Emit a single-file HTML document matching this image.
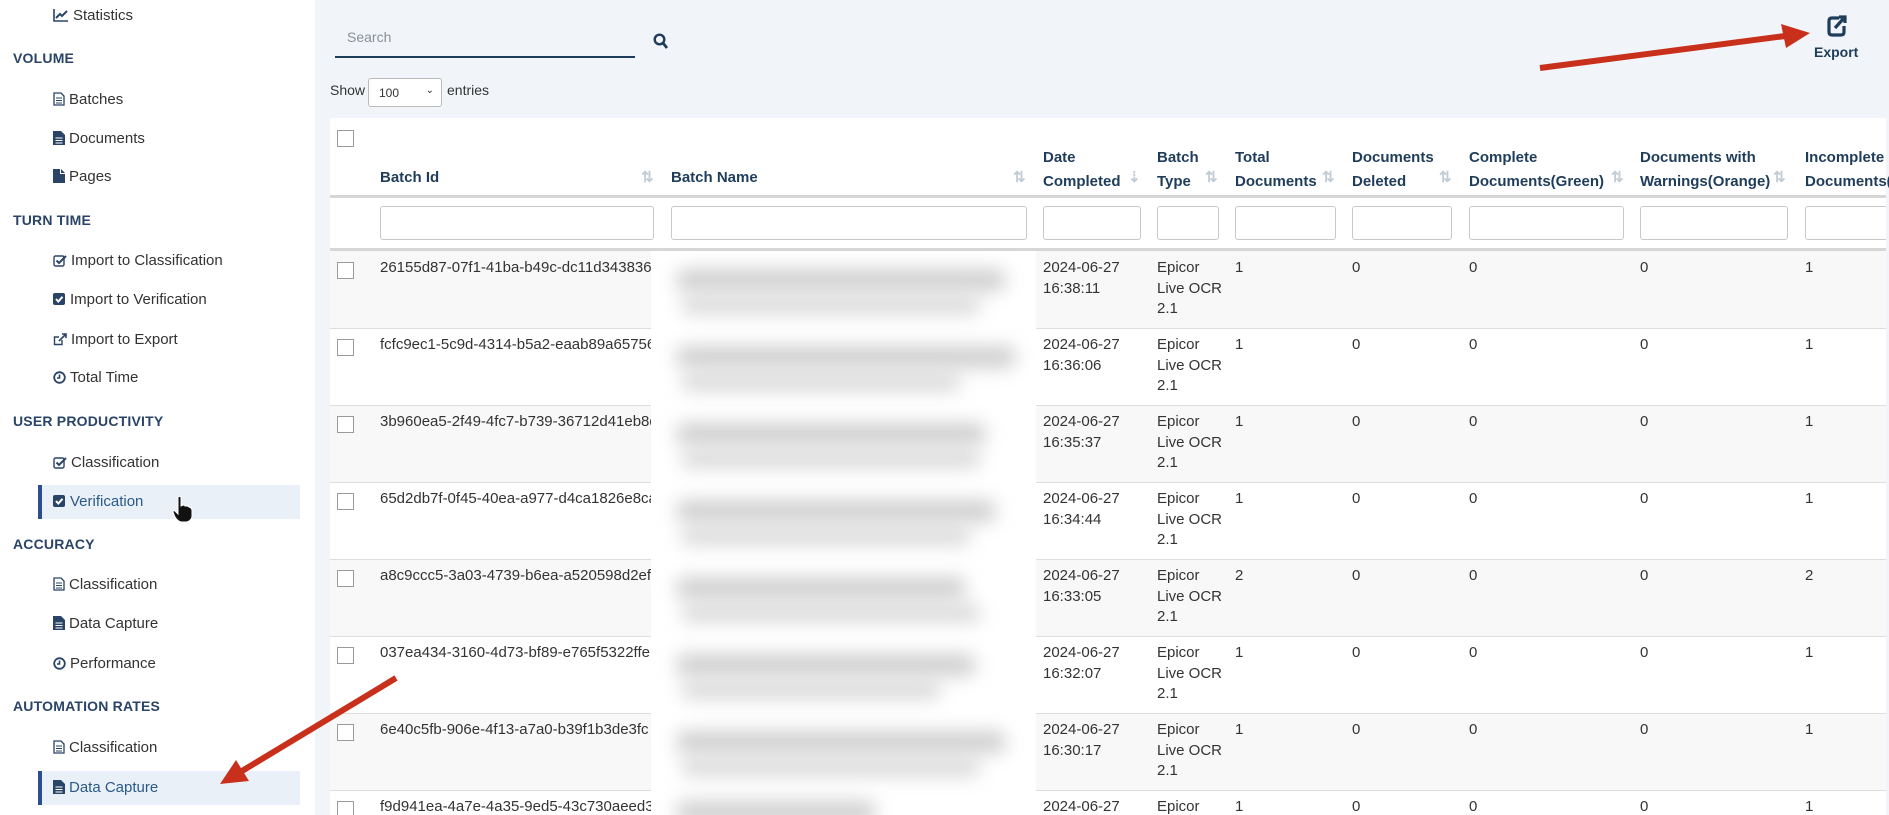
<!DOCTYPE html>
<html style="width:1889px;height:815px;overflow:hidden"><head><meta charset="utf-8"><style>
*{box-sizing:border-box;margin:0;padding:0}
html,body{overflow:hidden}
body{width:1889px;height:815px;overflow:hidden;background:#f1f5f9;font-family:"Liberation Sans",Arial,sans-serif;position:relative;color:#333}
.a{position:absolute;white-space:nowrap}
#sb{position:absolute;left:0;top:0;width:315px;height:815px;background:#fff}
.h{position:absolute;left:13px;font-size:14px;font-weight:bold;color:#2a4468;letter-spacing:.2px}
.it{position:absolute;left:38px;width:262px;height:34px;font-size:15px;color:#333;padding-left:15px;line-height:34px}
.it svg{vertical-align:-2px;margin-right:4px}
.sel{background:#e9f0f8;border-left:4px solid #2b4f8c;padding-left:11px;color:#2b5a88}
.th{position:absolute;font-size:15px;font-weight:bold;color:#1f3d5a;line-height:24px}
.srt{position:absolute;color:#c3cdd6;font-size:15px;font-weight:bold}
.fi{position:absolute;top:206px;height:34px;border:1px solid #c8c8c8;border-radius:3px;background:#fff}
.row{position:absolute;left:330px;width:1556px;height:77px;border-top:1px solid #ddd}
.cb{position:absolute;width:17px;height:17px;border:1px solid #9a9a9a;background:#fff}
.c{position:absolute;font-size:15px;color:#333;line-height:20.5px}
.blur{position:absolute;background:#cfcfcf;filter:blur(9px);border-radius:10px}
</style></head><body>
<div style="position:absolute;left:0;top:0;width:1889px;height:815px;overflow:hidden">

<div id="sb">
<div class="it" style="top:0px;height:32px;line-height:32px"><svg width="16" height="14" viewBox="0 0 16 14"><path d="M1 1V13H15" stroke="#2a4468" stroke-width="1.6" fill="none"/><path d="M3 10L7 6L9 8L14 3" stroke="#2a4468" stroke-width="2" fill="none"/></svg>Statistics</div>
<div class="h" style="top:50px">VOLUME</div>
<div class="it" style="top:83px"><svg width="12" height="14" viewBox="0 0 12 14"><path d="M1 1H8L11 4V13H1Z" stroke="#2a4468" stroke-width="1.3" fill="none"/><path d="M3 6H9M3 8.5H9M3 11H9" stroke="#2a4468"/></svg>Batches</div>
<div class="it" style="top:122px"><svg width="12" height="14" viewBox="0 0 12 14"><path d="M0 0H8L12 4V14H0Z" fill="#2a4468"/><path d="M2.5 7H9.5M2.5 9.5H9.5M2.5 12H9.5" stroke="#fff"/></svg>Documents</div>
<div class="it" style="top:160px"><svg width="12" height="14" viewBox="0 0 12 14"><path d="M0 0H7V5H12V14H0Z" fill="#2a4468"/><path d="M8 0L12 4H8Z" fill="#2a4468"/></svg>Pages</div>
<div class="h" style="top:212px">TURN TIME</div>
<div class="it" style="top:244px"><svg width="14" height="13" viewBox="0 0 14 13"><rect x="1" y="2" width="10" height="10" rx="1.5" stroke="#2a4468" stroke-width="1.4" fill="none"/><path d="M3.5 6.5L6 9L13 2" stroke="#2a4468" stroke-width="2" fill="none"/></svg>Import to Classification</div>
<div class="it" style="top:283px"><svg width="13" height="13" viewBox="0 0 13 13"><rect width="12" height="12" rx="2" fill="#2a4468"/><path d="M3 6L5.3 8.5L9.5 3.8" stroke="#fff" stroke-width="2" fill="none"/></svg>Import to Verification</div>
<div class="it" style="top:323px"><svg width="14" height="13" viewBox="0 0 14 13"><path d="M9 7V11.5H1.5V4H6" stroke="#2a4468" stroke-width="1.4" fill="none"/><path d="M6 8L13 1M9 1H13V5" stroke="#2a4468" stroke-width="1.6" fill="none"/></svg>Import to Export</div>
<div class="it" style="top:361px"><svg width="13" height="13" viewBox="0 0 13 13"><circle cx="6.5" cy="6.5" r="5.3" stroke="#2a4468" stroke-width="1.8" fill="none"/><path d="M6.5 3.5V7H4" stroke="#2a4468" stroke-width="1.6" fill="none"/></svg>Total Time</div>
<div class="h" style="top:413px">USER PRODUCTIVITY</div>
<div class="it" style="top:446px"><svg width="14" height="13" viewBox="0 0 14 13"><rect x="1" y="2" width="10" height="10" rx="1.5" stroke="#2a4468" stroke-width="1.4" fill="none"/><path d="M3.5 6.5L6 9L13 2" stroke="#2a4468" stroke-width="2" fill="none"/></svg>Classification</div>
<div class="it sel" style="top:485px"><svg width="13" height="13" viewBox="0 0 13 13"><rect width="12" height="12" rx="2" fill="#2a4468"/><path d="M3 6L5.3 8.5L9.5 3.8" stroke="#fff" stroke-width="2" fill="none"/></svg>Verification</div>
<div class="h" style="top:536px">ACCURACY</div>
<div class="it" style="top:568px"><svg width="12" height="14" viewBox="0 0 12 14"><path d="M1 1H8L11 4V13H1Z" stroke="#2a4468" stroke-width="1.3" fill="none"/><path d="M3 6H9M3 8.5H9M3 11H9" stroke="#2a4468"/></svg>Classification</div>
<div class="it" style="top:607px"><svg width="12" height="14" viewBox="0 0 12 14"><path d="M0 0H8L12 4V14H0Z" fill="#2a4468"/><path d="M2.5 7H9.5M2.5 9.5H9.5M2.5 12H9.5" stroke="#fff"/></svg>Data Capture</div>
<div class="it" style="top:647px"><svg width="13" height="13" viewBox="0 0 13 13"><circle cx="6.5" cy="6.5" r="5.3" stroke="#2a4468" stroke-width="1.8" fill="none"/><path d="M6.5 3.5V7H4" stroke="#2a4468" stroke-width="1.6" fill="none"/></svg>Performance</div>
<div class="h" style="top:698px">AUTOMATION RATES</div>
<div class="it" style="top:731px"><svg width="12" height="14" viewBox="0 0 12 14"><path d="M1 1H8L11 4V13H1Z" stroke="#2a4468" stroke-width="1.3" fill="none"/><path d="M3 6H9M3 8.5H9M3 11H9" stroke="#2a4468"/></svg>Classification</div>
<div class="it sel" style="top:771px"><svg width="12" height="14" viewBox="0 0 12 14"><path d="M0 0H8L12 4V14H0Z" fill="#2a4468"/><path d="M2.5 7H9.5M2.5 9.5H9.5M2.5 12H9.5" stroke="#fff"/></svg>Data Capture</div>
</div>

<svg class="a" style="left:172px;top:495px" width="22" height="28" viewBox="0 0 22 28"><path d="M6 2C7 1 9 1 9 3V11L11 10C12 10 13 10 13 11L15 11C16 11 17 12 17 12L19 13C20 14 20 15 20 16V21C20 24 17 27 14 27H10C7 27 5 25 3 22L1 17C1 16 2 15 3 16L6 19V3Z" fill="#111" stroke="#fff" stroke-width="1"/></svg>

<div class="a" style="left:347px;top:29px;font-size:14px;color:#8a8f95">Search</div>
<div class="a" style="left:335px;top:56px;width:300px;height:2px;background:#1f3d5a"></div>
<svg class="a" style="left:653px;top:33px" width="16" height="17" viewBox="0 0 16 17"><circle cx="6.5" cy="6.5" r="4.8" stroke="#1f3d5a" stroke-width="2.4" fill="none"/><path d="M10 10L14 15" stroke="#1f3d5a" stroke-width="2.8"/></svg>
<div class="a" style="left:330px;top:82px;font-size:14px;color:#333">Show</div>
<div class="a" style="left:368px;top:78px;width:74px;height:29px;border:1px solid #bbb;border-radius:3px;background:#fff;font-size:12px;padding:7px 0 0 10px">100<span style="position:absolute;right:7px;top:6px;font-size:10px">&#8964;</span></div>
<div class="a" style="left:447px;top:82px;font-size:14px;color:#333">entries</div>

<svg class="a" style="left:1826px;top:14px" width="22" height="24" viewBox="0 0 22 24"><path d="M13 4H6C4 4 3 5 3 7V18C3 20 4 21 6 21H15C17 21 18 20 18 18V12" stroke="#1f3d5a" stroke-width="3.2" fill="none"/><path d="M9 14L18 4M13 3H19V9" stroke="#1f3d5a" stroke-width="3.2" fill="none"/></svg>
<div class="a" style="left:1814px;top:44px;font-size:14px;font-weight:bold;color:#1f3d5a">Export</div>

<div class="a" style="left:330px;top:118px;width:1556px;height:697px;background:#fff"></div>
<div class="cb" style="left:337px;top:130px"></div>
<div class="th" style="left:380px;top:166px">Batch Id</div>
<div class="th" style="left:671px;top:166px">Batch Name</div>
<div class="th" style="left:1043px;top:146px">Date<br>Completed</div>
<div class="th" style="left:1157px;top:146px">Batch<br>Type</div>
<div class="th" style="left:1235px;top:146px">Total<br>Documents</div>
<div class="th" style="left:1352px;top:146px">Documents<br>Deleted</div>
<div class="th" style="left:1469px;top:146px">Complete<br>Documents(Green)</div>
<div class="th" style="left:1640px;top:146px">Documents with<br>Warnings(Orange)</div>
<div class="th" style="left:1805px;top:146px">Incomplete<br>Documents(</div>
<div class="srt" style="left:641px;top:168px">&#8645;</div>
<div class="srt" style="left:1013px;top:168px">&#8645;</div>
<div class="srt" style="left:1128px;top:168px">&#8675;</div>
<div class="srt" style="left:1205px;top:168px">&#8645;</div>
<div class="srt" style="left:1322px;top:168px">&#8645;</div>
<div class="srt" style="left:1439px;top:168px">&#8645;</div>
<div class="srt" style="left:1611px;top:168px">&#8645;</div>
<div class="srt" style="left:1773px;top:168px">&#8645;</div>
<div class="a" style="left:330px;top:195px;width:1556px;height:3px;background:#d6d6d6"></div>
<div class="fi" style="left:380px;width:274px"></div>
<div class="fi" style="left:671px;width:356px"></div>
<div class="fi" style="left:1043px;width:98px"></div>
<div class="fi" style="left:1157px;width:62px"></div>
<div class="fi" style="left:1235px;width:101px"></div>
<div class="fi" style="left:1352px;width:100px"></div>
<div class="fi" style="left:1469px;width:155px"></div>
<div class="fi" style="left:1640px;width:148px"></div>
<div class="fi" style="left:1805px;width:81px;border-right:0;border-radius:3px 0 0 3px"></div>
<div class="a" style="left:330px;top:248px;width:1556px;height:3px;background:#d6d6d6"></div>

<div class="row" style="top:251px;background:#f8f8f8;border-top:0"></div>
<div class="row" style="top:328px;background:#fff"></div>
<div class="row" style="top:405px;background:#f8f8f8"></div>
<div class="row" style="top:482px;background:#fff"></div>
<div class="row" style="top:559px;background:#f8f8f8"></div>
<div class="row" style="top:636px;background:#fff"></div>
<div class="row" style="top:713px;background:#f8f8f8"></div>
<div class="row" style="top:790px;background:#fff"></div>

<div class="cb" style="left:337px;top:262px"></div><div class="cb" style="left:337px;top:339px"></div><div class="cb" style="left:337px;top:416px"></div><div class="cb" style="left:337px;top:493px"></div><div class="cb" style="left:337px;top:570px"></div><div class="cb" style="left:337px;top:647px"></div><div class="cb" style="left:337px;top:724px"></div><div class="cb" style="left:337px;top:801px"></div>

<div class="c" style="left:380px;top:258px">26155d87-07f1-41ba-b49c-dc11d3438363</div>
<div class="c" style="left:380px;top:335px">fcfc9ec1-5c9d-4314-b5a2-eaab89a65756</div>
<div class="c" style="left:380px;top:412px">3b960ea5-2f49-4fc7-b739-36712d41eb8d</div>
<div class="c" style="left:380px;top:489px">65d2db7f-0f45-40ea-a977-d4ca1826e8ca</div>
<div class="c" style="left:380px;top:566px">a8c9ccc5-3a03-4739-b6ea-a520598d2ef1</div>
<div class="c" style="left:380px;top:643px">037ea434-3160-4d73-bf89-e765f5322ffe</div>
<div class="c" style="left:380px;top:720px">6e40c5fb-906e-4f13-a7a0-b39f1b3de3fc</div>
<div class="c" style="left:380px;top:797px">f9d941ea-4a7e-4a35-9ed5-43c730aeed39</div>

<div class="a" style="left:651px;top:251px;width:385px;height:564px;background:#fff;overflow:hidden">
<div class="blur" style="left:25px;top:18px;width:330px;height:22px"></div><div class="blur" style="left:30px;top:45px;width:300px;height:18px;opacity:.8"></div>
<div class="blur" style="left:25px;top:95px;width:340px;height:22px"></div><div class="blur" style="left:30px;top:122px;width:280px;height:18px;opacity:.8"></div>
<div class="blur" style="left:25px;top:172px;width:310px;height:22px"></div><div class="blur" style="left:30px;top:199px;width:300px;height:18px;opacity:.8"></div>
<div class="blur" style="left:25px;top:249px;width:320px;height:22px"></div><div class="blur" style="left:30px;top:276px;width:290px;height:18px;opacity:.8"></div>
<div class="blur" style="left:25px;top:326px;width:290px;height:22px"></div><div class="blur" style="left:30px;top:353px;width:300px;height:18px;opacity:.8"></div>
<div class="blur" style="left:25px;top:403px;width:300px;height:22px"></div><div class="blur" style="left:30px;top:430px;width:260px;height:18px;opacity:.8"></div>
<div class="blur" style="left:25px;top:480px;width:330px;height:22px"></div><div class="blur" style="left:30px;top:507px;width:300px;height:18px;opacity:.8"></div>
<div class="blur" style="left:25px;top:550px;width:200px;height:22px"></div>
</div>

<div class="c" style="left:1043px;top:258px">2024-06-27<br>16:38:11</div>
<div class="c" style="left:1043px;top:335px">2024-06-27<br>16:36:06</div>
<div class="c" style="left:1043px;top:412px">2024-06-27<br>16:35:37</div>
<div class="c" style="left:1043px;top:489px">2024-06-27<br>16:34:44</div>
<div class="c" style="left:1043px;top:566px">2024-06-27<br>16:33:05</div>
<div class="c" style="left:1043px;top:643px">2024-06-27<br>16:32:07</div>
<div class="c" style="left:1043px;top:720px">2024-06-27<br>16:30:17</div>
<div class="c" style="left:1043px;top:797px">2024-06-27</div>

<div class="c" style="left:1157px;top:258px">Epicor<br>Live OCR<br>2.1</div>
<div class="c" style="left:1157px;top:335px">Epicor<br>Live OCR<br>2.1</div>
<div class="c" style="left:1157px;top:412px">Epicor<br>Live OCR<br>2.1</div>
<div class="c" style="left:1157px;top:489px">Epicor<br>Live OCR<br>2.1</div>
<div class="c" style="left:1157px;top:566px">Epicor<br>Live OCR<br>2.1</div>
<div class="c" style="left:1157px;top:643px">Epicor<br>Live OCR<br>2.1</div>
<div class="c" style="left:1157px;top:720px">Epicor<br>Live OCR<br>2.1</div>
<div class="c" style="left:1157px;top:797px">Epicor</div>

<div class="c" style="left:1235px;top:258px">1</div><div class="c" style="left:1352px;top:258px">0</div><div class="c" style="left:1469px;top:258px">0</div><div class="c" style="left:1640px;top:258px">0</div><div class="c" style="left:1805px;top:258px">1</div>
<div class="c" style="left:1235px;top:335px">1</div><div class="c" style="left:1352px;top:335px">0</div><div class="c" style="left:1469px;top:335px">0</div><div class="c" style="left:1640px;top:335px">0</div><div class="c" style="left:1805px;top:335px">1</div>
<div class="c" style="left:1235px;top:412px">1</div><div class="c" style="left:1352px;top:412px">0</div><div class="c" style="left:1469px;top:412px">0</div><div class="c" style="left:1640px;top:412px">0</div><div class="c" style="left:1805px;top:412px">1</div>
<div class="c" style="left:1235px;top:489px">1</div><div class="c" style="left:1352px;top:489px">0</div><div class="c" style="left:1469px;top:489px">0</div><div class="c" style="left:1640px;top:489px">0</div><div class="c" style="left:1805px;top:489px">1</div>
<div class="c" style="left:1235px;top:566px">2</div><div class="c" style="left:1352px;top:566px">0</div><div class="c" style="left:1469px;top:566px">0</div><div class="c" style="left:1640px;top:566px">0</div><div class="c" style="left:1805px;top:566px">2</div>
<div class="c" style="left:1235px;top:643px">1</div><div class="c" style="left:1352px;top:643px">0</div><div class="c" style="left:1469px;top:643px">0</div><div class="c" style="left:1640px;top:643px">0</div><div class="c" style="left:1805px;top:643px">1</div>
<div class="c" style="left:1235px;top:720px">1</div><div class="c" style="left:1352px;top:720px">0</div><div class="c" style="left:1469px;top:720px">0</div><div class="c" style="left:1640px;top:720px">0</div><div class="c" style="left:1805px;top:720px">1</div>
<div class="c" style="left:1235px;top:797px">1</div><div class="c" style="left:1352px;top:797px">0</div><div class="c" style="left:1469px;top:797px">0</div><div class="c" style="left:1640px;top:797px">0</div><div class="c" style="left:1805px;top:797px">1</div>

<svg class="a" style="left:0;top:0" width="1889" height="815" viewBox="0 0 1889 815">
<g fill="#c9301b" stroke="#c9301b">
<line x1="1540" y1="68" x2="1785" y2="36" stroke-width="6"/>
<polygon points="1810,33 1781,24 1786,48" stroke="none"/>
<line x1="396" y1="678" x2="242" y2="771" stroke-width="6"/>
<polygon points="220,784 236,760 249,781" stroke="none"/>
</g></svg>
</div>
</body></html>
